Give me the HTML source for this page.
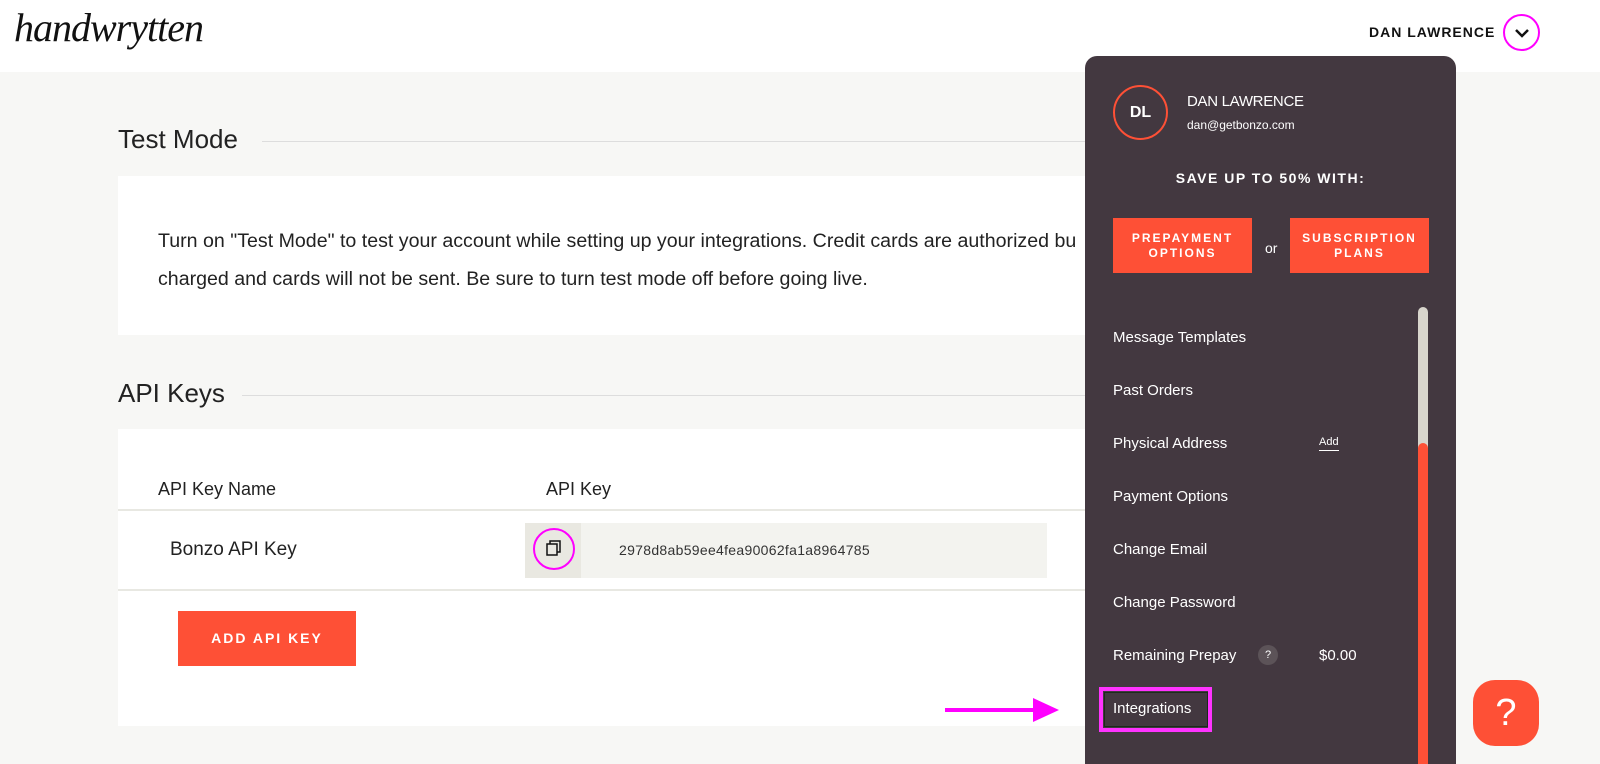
<!DOCTYPE html>
<html><head><style>
*{margin:0;padding:0;box-sizing:border-box}
html{width:1600px;height:764px;overflow:hidden}
body{width:1600px;height:764px;overflow:hidden;background:#f7f7f5;font-family:"Liberation Sans",sans-serif;position:relative;color:#222}
.abs{position:absolute}
.hdr{left:0;top:0;width:1600px;height:72px;background:#fff}
.card{background:#fff;left:118px;width:1100px}
h2{font-weight:400;font-size:26px;color:#222}
.line{height:1px;background:#ddd}
.btn{background:#fe5036;color:#fff;font-weight:700;letter-spacing:2px;text-align:center}
.dd{left:1085px;top:56px;width:371px;height:708px;background:#433840;border-radius:12px 12px 0 0;color:#fff;overflow:hidden}
.mi{position:absolute;left:28px;font-size:15px;color:#fff}
</style></head><body>
<div class="abs hdr"></div>
<div class="abs" style="left:14px;top:4px;font-family:'Liberation Serif',serif;font-style:italic;font-size:40px;color:#111;letter-spacing:-1px">handwrytten</div>
<div class="abs" style="left:1369px;top:24px;font-size:14px;font-weight:700;letter-spacing:1px;color:#111">DAN LAWRENCE</div>
<div class="abs" style="left:1503px;top:14px;width:37px;height:37px;border:2px solid #f0f;border-radius:50%"></div>
<svg class="abs" style="left:1513px;top:26px" width="18" height="14"><path d="M3 4 L9 10 L15 4" stroke="#111" stroke-width="2.5" fill="none"/></svg>

<h2 class="abs" style="left:118px;top:124px">Test Mode</h2>
<div class="abs line" style="left:262px;top:141px;width:900px"></div>
<div class="abs card" style="top:176px;height:159px"></div>
<div class="abs" style="left:158px;top:222px;font-size:19.6px;line-height:38px;color:#222;width:930px;white-space:nowrap">Turn on "Test Mode" to test your account while setting up your integrations. Credit cards are authorized bu<br>charged and cards will not be sent. Be sure to turn test mode off before going live.</div>

<h2 class="abs" style="left:118px;top:378px">API Keys</h2>
<div class="abs line" style="left:242px;top:395px;width:900px"></div>
<div class="abs card" style="top:429px;height:297px"></div>
<div class="abs" style="left:158px;top:479px;font-size:18px">API Key Name</div>
<div class="abs" style="left:546px;top:479px;font-size:18px">API Key</div>
<div class="abs" style="left:118px;top:509px;width:1000px;height:2px;background:#e8e8e2"></div>
<div class="abs" style="left:118px;top:589px;width:1000px;height:2px;background:#e8e8e2"></div>
<div class="abs" style="left:170px;top:539px;font-size:19px">Bonzo API Key</div>
<div class="abs" style="left:525px;top:523px;width:522px;height:55px;background:#f3f3ef"></div>
<div class="abs" style="left:525px;top:523px;width:56px;height:55px;background:#e9e8e1"></div>
<div class="abs" style="left:533px;top:528px;width:42px;height:42px;border:2px solid #f0f;border-radius:50%"></div>
<svg class="abs" style="left:545px;top:539px" width="18" height="18"><rect x="5" y="2" width="10" height="11" fill="none" stroke="#111" stroke-width="1.5"/><rect x="2" y="5" width="10" height="11" fill="#e9e8e1" stroke="#111" stroke-width="1.5"/></svg>
<div class="abs" style="left:619px;top:542px;font-size:14px;color:#333;letter-spacing:.3px">2978d8ab59ee4fea90062fa1a8964785</div>
<div class="abs btn" style="left:178px;top:611px;width:178px;height:55px;line-height:55px;font-size:14px">ADD API KEY</div>

<svg class="abs" style="left:945px;top:695px" width="115" height="30"><rect x="0" y="13" width="90" height="4" fill="#f0f"/><path d="M88 3 L114 15 L88 27Z" fill="#f0f"/></svg>

<div class="abs dd">
 <div class="abs" style="left:28px;top:29px;width:55px;height:55px;border:2px solid #fe5036;border-radius:50%;text-align:center;line-height:51px;font-weight:700;font-size:16px">DL</div>
 <div class="abs" style="left:102px;top:37px;font-size:15px;letter-spacing:-.3px">DAN LAWRENCE</div>
 <div class="abs" style="left:102px;top:62px;font-size:12px">dan@getbonzo.com</div>
 <div class="abs" style="left:0;width:371px;top:114px;text-align:center;font-weight:700;font-size:14px;letter-spacing:1.5px">SAVE UP TO 50% WITH:</div>
 <div class="abs btn" style="left:28px;top:162px;width:139px;height:55px;font-size:12px;line-height:15px;padding-top:13px">PREPAYMENT<br>OPTIONS</div>
 <div class="abs" style="left:180px;top:184px;font-size:14px">or</div>
 <div class="abs btn" style="left:205px;top:162px;width:139px;height:55px;font-size:12px;line-height:15px;padding-top:13px">SUBSCRIPTION<br>PLANS</div>
 <div class="mi" style="top:273px">Message Templates</div>
 <div class="mi" style="top:326px">Past Orders</div>
 <div class="mi" style="top:379px">Physical Address</div>
 <div class="abs" style="left:234px;top:380px;font-size:11px;border-bottom:1px solid #fff;padding-bottom:2px">Add</div>
 <div class="mi" style="top:432px">Payment Options</div>
 <div class="mi" style="top:485px">Change Email</div>
 <div class="mi" style="top:538px">Change Password</div>
 <div class="mi" style="top:591px">Remaining Prepay</div>
 <div class="abs" style="left:173px;top:589px;width:20px;height:20px;border-radius:50%;background:#5c5358;font-size:11px;text-align:center;line-height:20px">?</div>
 <div class="abs" style="left:234px;top:591px;font-size:15px">$0.00</div>
 <div class="abs" style="left:14px;top:631px;width:113px;height:45px;border:4px solid #f3f;"></div>
 <div class="abs" style="left:19px;top:636px;width:104px;height:35px;border:1px solid #1b2b1b"></div>
 <div class="mi" style="top:644px">Integrations</div>
 <div class="abs" style="left:333px;top:251px;width:10px;height:150px;background:#d8d5cc;border-radius:5px"></div>
 <div class="abs" style="left:333px;top:387px;width:10px;height:340px;background:#fe5036;border-radius:5px"></div>
</div>
<div class="abs" style="left:1473px;top:680px;width:66px;height:66px;background:#fe5036;border-radius:22px;color:#fff;font-size:38px;text-align:center;line-height:66px">?</div>
</body></html>
